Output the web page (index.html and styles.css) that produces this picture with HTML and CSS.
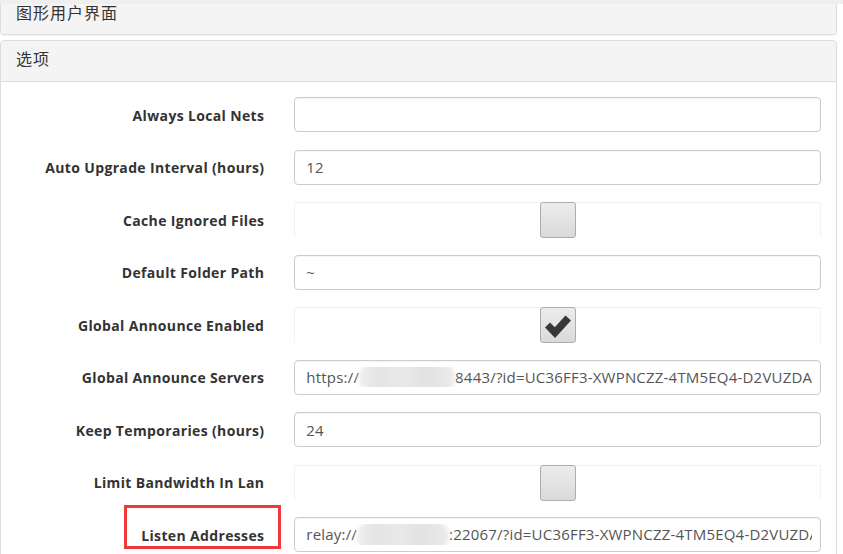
FILE: index.html
```html
<!DOCTYPE html>
<html lang="zh-CN">
<head>
<meta charset="utf-8">
<title>选项</title>
<link rel="stylesheet" href="styles.css">
</head>
<body>
<div class="topstrip"></div>
<div class="page">
  <div class="panel panel-collapsed">
    <div class="panel-heading">图形用户界面</div>
  </div>
  <div class="panel panel-open">
    <div class="panel-heading">选项</div>
    <div class="panel-body">
      <div class="form-group">
        <label class="control-label">Always Local Nets</label>
        <div class="control"><div class="input"><div class="clip"></div></div></div>
      </div>
      <div class="form-group">
        <label class="control-label">Auto Upgrade Interval (hours)</label>
        <div class="control"><div class="input"><div class="clip">12</div></div></div>
      </div>
      <div class="form-group">
        <label class="control-label">Cache Ignored Files</label>
        <div class="control"><div class="check-wrap"><span class="checkbox"></span></div></div>
      </div>
      <div class="form-group">
        <label class="control-label">Default Folder Path</label>
        <div class="control"><div class="input"><div class="clip">~</div></div></div>
      </div>
      <div class="form-group">
        <label class="control-label">Global Announce Enabled</label>
        <div class="control"><div class="check-wrap"><span class="checkbox checked"><svg viewBox="0 0 36 36" width="36" height="36" aria-hidden="true"><path d="M5 20.5 L10 15.5 L14.8 20.3 L25.5 8.5 L31 13.5 L15 31 Z" fill="#383838"/></svg></span></div></div>
      </div>
      <div class="form-group">
        <label class="control-label">Global Announce Servers</label>
        <div class="control"><div class="input"><div class="clip">https://<span class="mask mask-a"></span>8443/?id=UC36FF3-XWPNCZZ-4TM5EQ4-D2VUZDA</div></div></div>
      </div>
      <div class="form-group">
        <label class="control-label">Keep Temporaries (hours)</label>
        <div class="control"><div class="input"><div class="clip">24</div></div></div>
      </div>
      <div class="form-group">
        <label class="control-label">Limit Bandwidth In Lan</label>
        <div class="control"><div class="check-wrap"><span class="checkbox"></span></div></div>
      </div>
      <div class="form-group annotated">
        <label class="control-label">Listen Addresses</label>
        <div class="control"><div class="input"><div class="clip">relay://<span class="mask mask-b"></span>:22067/?id=UC36FF3-XWPNCZZ-4TM5EQ4-D2VUZDA</div></div></div>
        <div class="annot"></div>
      </div>
    </div>
  </div>
</div>
</body>
</html>
```
FILE: styles.css
```css
* { box-sizing: border-box; }
html, body {
  margin: 0;
  padding: 0;
  background: #ffffff;
  overflow: hidden;
}
body {
  font-family: "Open Sans", "Noto Sans CJK SC", sans-serif;
  font-size: 14px;
  color: #333333;
  height: 554px;
}
.topstrip {
  position: absolute;
  top: 0;
  left: 0;
  right: 0;
  height: 4px;
  background: #efefef;
  z-index: 5;
}
.page {
  width: 837px;
}
.panel {
  border: 1px solid #dddddd;
  border-radius: 4px;
  background: #ffffff;
  box-shadow: 0 1px 1px rgba(0, 0, 0, 0.05);
}
.panel-collapsed {
  margin-top: -7px;
}
.panel-open {
  margin-top: 5px;
  border-bottom-left-radius: 0;
  border-bottom-right-radius: 0;
}
.panel-heading {
  height: 40px;
  padding: 0 15px 6px 15px;
  display: flex;
  align-items: center;
  background: #f4f4f4;
  font-family: "Noto Sans CJK SC", "Open Sans", sans-serif;
  font-size: 16px;
  letter-spacing: 1px;
  color: #333333;
  border-top-left-radius: 3px;
  border-top-right-radius: 3px;
}
.panel-collapsed .panel-heading {
  border-radius: 3px;
  padding-bottom: 4px;
}
.panel-open .panel-heading {
  border-bottom: 1px solid #dddddd;
  height: 41px;
}
.panel-body {
  padding: 15px 0 0 0;
}
.form-group {
  display: flex;
  height: 35px;
  margin-bottom: 17.5px;
}
.control-label {
  flex: 0 0 33.3333%;
  padding-right: 15px;
  display: flex;
  align-items: center;
  justify-content: flex-end;
  font-weight: 700;
  font-size: 14px;
  letter-spacing: 0.35px;
  color: #333333;
  white-space: nowrap;
  padding-top: 1px;
}
.control {
  flex: 1 1 auto;
  padding: 0 15px;
  min-width: 0;
}
.input {
  height: 35px;
  border: 1px solid #cccccc;
  border-radius: 4px;
  background: #ffffff;
  box-shadow: inset 0 1px 1px rgba(0, 0, 0, 0.04);
  padding: 0 8px 0 11px;
  display: flex;
  align-items: center;
  color: #555555;
  font-size: 15px;
  letter-spacing: 0.2px;
}
.clip {
  flex: 1 1 auto;
  min-width: 0;
  overflow: hidden;
  white-space: nowrap;
  line-height: 20px;
  position: relative;
}
.mask {
  display: inline-block;
  vertical-align: middle;
  height: 30px;
  margin-top: -6px;
  margin-bottom: -6px;
  background: linear-gradient(90deg, #efefef 0%, #e4e4e4 20%, #e9e9e9 45%, #e2e2e2 70%, #ececec 100%);
  border-radius: 14px;
  filter: blur(2px);
}
.mask-a { width: 96px; }
.mask-b { width: 92px; }
.check-wrap {
  height: 36px;
  border: 1px solid #f1f1f1;
  border-bottom-color: transparent;
  border-radius: 2px;
  display: flex;
  justify-content: center;
  align-items: flex-start;
}
.checkbox {
  display: block;
  width: 36px;
  height: 36px;
  margin-top: -1px;
  border: 1px solid #adadad;
  border-radius: 3px;
  background: linear-gradient(#ececec, #dadada);
  position: relative;
}
.checkbox svg {
  position: absolute;
  left: -1px;
  top: -1px;
}
.annotated {
  position: relative;
}
.annot {
  position: absolute;
  left: 123px;
  top: -12px;
  width: 157px;
  height: 44px;
  border: 3px solid #f03a3a;
  pointer-events: none;
}
```
